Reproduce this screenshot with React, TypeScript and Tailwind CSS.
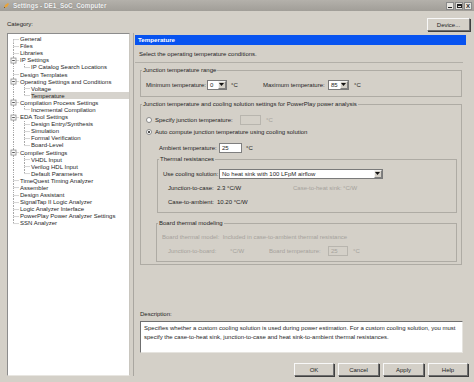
import React from "react";

type Item = { t: string; l: 0 | 1; exp?: boolean; last?: boolean; sel?: boolean };

const tree: Item[] = [
  { t: "General", l: 0 },
  { t: "Files", l: 0 },
  { t: "Libraries", l: 0 },
  { t: "IP Settings", l: 0, exp: true },
  { t: "IP Catalog Search Locations", l: 1, last: true },
  { t: "Design Templates", l: 0 },
  { t: "Operating Settings and Conditions", l: 0, exp: true },
  { t: "Voltage", l: 1 },
  { t: "Temperature", l: 1, last: true, sel: true },
  { t: "Compilation Process Settings", l: 0, exp: true },
  { t: "Incremental Compilation", l: 1, last: true },
  { t: "EDA Tool Settings", l: 0, exp: true },
  { t: "Design Entry/Synthesis", l: 1 },
  { t: "Simulation", l: 1 },
  { t: "Formal Verification", l: 1 },
  { t: "Board-Level", l: 1, last: true },
  { t: "Compiler Settings", l: 0, exp: true },
  { t: "VHDL Input", l: 1 },
  { t: "Verilog HDL Input", l: 1 },
  { t: "Default Parameters", l: 1, last: true },
  { t: "TimeQuest Timing Analyzer", l: 0 },
  { t: "Assembler", l: 0 },
  { t: "Design Assistant", l: 0 },
  { t: "SignalTap II Logic Analyzer", l: 0 },
  { t: "Logic Analyzer Interface", l: 0 },
  { t: "PowerPlay Power Analyzer Settings", l: 0 },
  { t: "SSN Analyzer", l: 0 },
];

const H = 7.1;
const C = H / 2;

function Connector({ it, first, lastTop }: { it: Item; first: boolean; lastTop: boolean }) {
  const w = it.l === 0 ? 12 : 23;
  const st = { stroke: "#a8a8a8", strokeWidth: 1, strokeDasharray: "1 1" };
  return (
    <svg width={w} height={H} className="shrink-0">
      <line x1={5.5} y1={first ? C : 0} x2={5.5} y2={lastTop ? C : H} {...st} />
      {it.l === 0 && <line x1={5.5} y1={C} x2={11} y2={C} {...st} />}
      {it.l === 1 && (
        <>
          <line x1={16.5} y1={0} x2={16.5} y2={it.last ? C : H} {...st} />
          <line x1={16.5} y1={C} x2={22} y2={C} {...st} />
        </>
      )}
      {it.exp && (
        <>
          <rect x={3} y={C - 2.5} width={5} height={5} fill="#fff" stroke="#8a8a8a" strokeWidth={0.8} />
          <line x1={4.2} y1={C} x2={6.8} y2={C} stroke="#222" strokeWidth={0.8} />
        </>
      )}
    </svg>
  );
}

function GroupBox({ title, className, children }: { title: string; className?: string; children?: React.ReactNode }) {
  return (
    <div className={`relative border border-[#aeaba4] ${className ?? ""}`}>
      <span className="absolute -top-[5px] left-[1px] px-[1px] bg-[#d4d0c8] leading-[8px] whitespace-nowrap">{title}</span>
      {children}
    </div>
  );
}

function Select({ value, w }: { value: string; w: string }) {
  return (
    <div className={`${w} h-[10px] bg-white border border-[#7a7a7a] flex items-center`}>
      <span className="flex-1 pl-[2px] leading-[8px] whitespace-nowrap overflow-hidden">{value}</span>
      <span className="w-[8px] h-[8px] mr-[0.5px] bg-[#d4d0c8] border border-[#f4f4f4] border-r-[#808080] border-b-[#808080] flex items-center justify-center">
        <svg width="5" height="3" viewBox="0 0 5 3">
          <path d="M0 0h5L2.5 3z" fill="#111" />
        </svg>
      </span>
    </div>
  );
}

function Input({ value, w, disabled }: { value?: string; w: string; disabled?: boolean }) {
  return (
    <div
      className={`${w} h-[10px] border border-[#7f7f7f] flex items-center pl-[2px] leading-[8px] ${
        disabled ? "bg-[#d4d0c8] text-[#a5a29c] border-[#b8b5ae]" : "bg-white"
      }`}
    >
      {value}
    </div>
  );
}

function Radio({ on }: { on?: boolean }) {
  return (
    <span className="w-[6px] h-[6px] rounded-full bg-white border border-[#8a8a8a] flex items-center justify-center shrink-0">
      {on && <span className="w-[2px] h-[2px] rounded-full bg-[#111]" />}
    </span>
  );
}

function Btn({ label, w }: { label: string; w: string }) {
  return (
    <div
      className={`${w} h-[13px] flex items-center justify-center bg-[#d4d0c8] border border-[#f8f8f8] border-r-[#6e6e6e] border-b-[#6e6e6e] shadow-[1px_1px_0_#404040] leading-[8px]`}
    >
      {label}
    </div>
  );
}

export default function App() {
  return (
    <div className="w-[474px] h-[382px] bg-[#d4d0c8] flex flex-col overflow-hidden text-[6px] leading-[8px] text-[#1e1e1e] font-['Liberation_Sans',Arial,sans-serif]">
      {/* Title bar */}
      <div className="h-[11px] shrink-0 bg-gradient-to-b from-[#b4b1ab] to-[#a19e98] flex items-center pl-[3px] pr-[2px]">
        <svg width="7" height="7" viewBox="0 0 7 7" className="shrink-0">
          <path d="M1 6l1-3 3-2 1 1-2 3z" fill="#e8a33a" />
          <path d="M1 6l1-1" stroke="#6a4a1a" strokeWidth="0.8" />
        </svg>
        <span className="ml-[3px] font-bold text-[6.4px] text-[#f2f2f2] [text-shadow:0_0_1px_#777]">Settings - DE1_SoC_Computer</span>
        <div className="ml-auto flex gap-[1px]">
          <span className="w-[8px] h-[8px] bg-[#e6e4df] border border-[#8a8a8a] flex items-end justify-center pb-[1px]">
            <span className="w-[4px] h-[1px] bg-[#222]" />
          </span>
          <span className="w-[8px] h-[8px] bg-[#e6e4df] border border-[#8a8a8a] flex items-center justify-center">
            <span className="w-[5px] h-[4px] border border-[#222] border-t-2" />
          </span>
          <span className="w-[8px] h-[8px] bg-[#e6e4df] border border-[#8a8a8a] flex items-center justify-center text-[6px] font-bold leading-[6px] text-[#222]">
            X
          </span>
        </div>
      </div>

      <div className="flex-1 flex flex-col pl-[7px] pr-[4px]">
        {/* Category row */}
        <div className="h-[22px] shrink-0 flex items-end justify-between">
          <span className="mb-[5px]">Category:</span>
          <div className="mb-[2px]">
            <Btn label="Device..." w="w-[43px]" />
          </div>
        </div>

        {/* Main */}
        <div className="flex-1 flex pb-[6px]">
          {/* Tree */}
          <div className="w-[123px] shrink-0 bg-white border border-[#8c8c8c] border-r-[#c9c6bf] border-b-[#e8e6e1] pt-[1.5px] overflow-hidden">
            {tree.map((it, i) => (
              <div key={it.t} className="flex items-center" style={{ height: H }}>
                <Connector it={it} first={i === 0} lastTop={i === tree.length - 1} />
                <span
                  className={`flex-1 h-full flex items-center whitespace-nowrap ${it.sel ? "bg-[#d6d3cd]" : ""}`}
                >
                  {it.t}
                </span>
              </div>
            ))}
          </div>

          {/* Right column */}
          <div className="flex-1 ml-[3px] border-l border-[#a9a6a0] flex flex-col">
            <div className="flex flex-col pt-[2px]">
              <div className="ml-[1px] mr-[4px] h-[10px] bg-[#0753f0] text-white font-bold text-[6.2px] flex items-center pl-[3px]">
                Temperature
              </div>
              <div className="mt-[5px] pl-[5px] h-[8px]">Select the operating temperature conditions.</div>
              <div className="mt-[4px] ml-[1px] mr-[7px] h-[1px] bg-[#b2afa8]" />

              {/* Junction temperature range */}
              <GroupBox title="Junction temperature range" className="mt-[7px] ml-[6px] mr-[8px] h-[27px] flex items-center pt-[2px]">
                <div className="flex items-center pl-[5px]">
                  <span className="w-[61px]">Minimum temperature:</span>
                  <Select value="0" w="w-[20px]" />
                  <span className="ml-[4px] w-[32px]">°C</span>
                  <span className="w-[65px]">Maximum temperature:</span>
                  <Select value="85" w="w-[21px]" />
                  <span className="ml-[5px]">°C</span>
                </div>
              </GroupBox>

              {/* Cooling settings */}
              <GroupBox
                title="Junction temperature and cooling solution settings for PowerPlay power analysis"
                className="mt-[7px] ml-[6px] mr-[8px] h-[161px] flex flex-col pt-[10px]"
              >
                <div className="h-[10px] flex items-center pl-[5px]">
                  <Radio />
                  <span className="ml-[3px] w-[85px]">Specify junction temperature:</span>
                  <Input w="w-[21px]" disabled />
                  <span className="ml-[5px] text-[#a5a29c]">°C</span>
                </div>
                <div className="mt-[2px] h-[10px] flex items-center pl-[5px]">
                  <Radio on />
                  <span className="ml-[3px]">Auto compute junction temperature using cooling solution</span>
                </div>
                <div className="mt-[5.5px] h-[10px] flex items-center pl-[18px]">
                  <span className="w-[60px]">Ambient temperature:</span>
                  <Input value="25" w="w-[23px]" />
                  <span className="ml-[4px]">°C</span>
                </div>

                <GroupBox title="Thermal resistances" className="mt-[6.5px] ml-[16px] mr-[4px] h-[54px] flex flex-col pt-[8px]">
                  <div className="h-[11px] flex items-center pl-[5px]">
                    <span className="w-[56px]">Use cooling solution:</span>
                    <Select value="No heat sink with 100 LFpM airflow" w="w-[164px]" />
                  </div>
                  <div className="mt-[3.5px] h-[10px] flex items-center pl-[10px]">
                    <span className="w-[49px]">Junction-to-case:</span>
                    <span className="w-[76px]">2.3 °C/W</span>
                    <span className="w-[50px] text-[#a5a29c]">Case-to-heat sink:</span>
                    <span className="text-[#a5a29c]">°C/W</span>
                  </div>
                  <div className="mt-[4px] h-[10px] flex items-center pl-[10px]">
                    <span className="w-[49px]">Case-to-ambient:</span>
                    <span>10.20 °C/W</span>
                  </div>
                </GroupBox>

                <GroupBox title="Board thermal modeling" className="mt-[9.5px] ml-[15px] mr-[4px] h-[39px] flex flex-col pt-[8px]">
                  <div className="h-[10px] flex items-center pl-[5px] text-[#a5a29c]">
                    Board thermal model:&nbsp; Included in case-to-ambient thermal resistance
                  </div>
                  <div className="mt-[4px] h-[10px] flex items-center pl-[11px] text-[#a5a29c]">
                    <span className="w-[62px]">Junction-to-board:</span>
                    <span className="w-[39px]">°C/W</span>
                    <span className="w-[59px]">Board temperature:</span>
                    <Input value="25" w="w-[20px]" disabled />
                    <span className="ml-[5px]">°C</span>
                  </div>
                </GroupBox>
              </GroupBox>
            </div>

            {/* Description */}
            <div className="mt-auto pl-[6px]">
              <div className="h-[8px]">Description:</div>
              <div className="mt-[3px] mr-[7px] h-[32px] bg-white border border-[#6f6f6f] border-r-[#e6e4df] border-b-[#e6e4df] px-[3px] pt-[1.5px] leading-[9px]">
                Specifies whether a custom cooling solution is used during power estimation. For a custom cooling solution, you must
                <br />
                specify the case-to-heat sink, junction-to-case and heat sink-to-ambient thermal resistances.
              </div>
              <div className="mt-[10px] flex justify-end gap-[4px] mr-[2px]">
                <Btn label="OK" w="w-[40px]" />
                <Btn label="Cancel" w="w-[41px]" />
                <Btn label="Apply" w="w-[41px]" />
                <Btn label="Help" w="w-[40px]" />
              </div>
            </div>
          </div>
        </div>
      </div>
    </div>
  );
}
